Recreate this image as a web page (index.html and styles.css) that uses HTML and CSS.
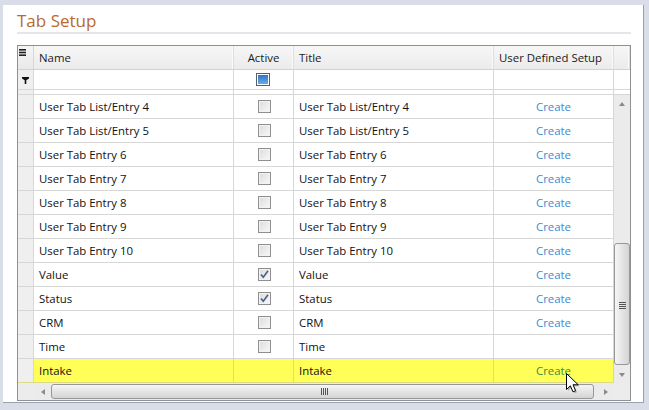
FILE: index.html
```html
<!DOCTYPE html>
<html lang="en">
<head>
    <meta charset="UTF-8">
    <title>Tab Setup</title>
    <link rel="stylesheet" href="styles.css">
</head>
<body>

<div class="panel">
    <h1 class="page-title">Tab Setup</h1>

    <div class="grid">
        <!-- header -->
        <div class="row head">
            <div class="ind">
                <svg width="7" height="7" viewBox="0 0 7 7"><rect x="0" y="0" width="7" height="1.6" fill="#222"/><rect x="0" y="2.7" width="7" height="1.6" fill="#222"/><rect x="0" y="5.4" width="7" height="1.6" fill="#222"/></svg>
            </div>
            <div class="cell c-name">Name</div>
            <div class="cell c-active">Active</div>
            <div class="cell c-title">Title</div>
            <div class="cell c-setup">User Defined Setup</div>
            <div class="cell c-spare"></div>
        </div>

        <!-- filter row -->
        <div class="row filter">
            <div class="ind">
                <svg width="7" height="7" viewBox="0 0 7 7"><path d="M0 0H7V1.5L4.3 3.2V7H2.7V3.2L0 1.5Z" fill="#111"/></svg>
            </div>
            <div class="cell c-name"></div>
            <div class="cell c-active"><span class="check mixed"></span></div>
            <div class="cell c-title"></div>
            <div class="cell c-setup"></div>
            <div class="cell c-spare"></div>
        </div>

        <!-- partially scrolled row -->
        <div class="row gap">
            <div class="ind"></div>
            <div class="cell c-name"></div>
            <div class="cell c-active"></div>
            <div class="cell c-title"></div>
            <div class="cell c-setup"></div>
            <div class="cell c-spare"></div>
        </div>

        <div class="body">
            <div class="rows">
                <div class="row">
                    <div class="ind"></div>
                    <div class="cell c-name">User Tab List/Entry 4</div>
                    <div class="cell c-active"><span class="check"></span></div>
                    <div class="cell c-title">User Tab List/Entry 4</div>
                    <div class="cell c-setup"><a class="create">Create</a></div>
                </div>
                <div class="row">
                    <div class="ind"></div>
                    <div class="cell c-name">User Tab List/Entry 5</div>
                    <div class="cell c-active"><span class="check"></span></div>
                    <div class="cell c-title">User Tab List/Entry 5</div>
                    <div class="cell c-setup"><a class="create">Create</a></div>
                </div>
                <div class="row">
                    <div class="ind"></div>
                    <div class="cell c-name">User Tab Entry 6</div>
                    <div class="cell c-active"><span class="check"></span></div>
                    <div class="cell c-title">User Tab Entry 6</div>
                    <div class="cell c-setup"><a class="create">Create</a></div>
                </div>
                <div class="row">
                    <div class="ind"></div>
                    <div class="cell c-name">User Tab Entry 7</div>
                    <div class="cell c-active"><span class="check"></span></div>
                    <div class="cell c-title">User Tab Entry 7</div>
                    <div class="cell c-setup"><a class="create">Create</a></div>
                </div>
                <div class="row">
                    <div class="ind"></div>
                    <div class="cell c-name">User Tab Entry 8</div>
                    <div class="cell c-active"><span class="check"></span></div>
                    <div class="cell c-title">User Tab Entry 8</div>
                    <div class="cell c-setup"><a class="create">Create</a></div>
                </div>
                <div class="row">
                    <div class="ind"></div>
                    <div class="cell c-name">User Tab Entry 9</div>
                    <div class="cell c-active"><span class="check"></span></div>
                    <div class="cell c-title">User Tab Entry 9</div>
                    <div class="cell c-setup"><a class="create">Create</a></div>
                </div>
                <div class="row">
                    <div class="ind"></div>
                    <div class="cell c-name">User Tab Entry 10</div>
                    <div class="cell c-active"><span class="check"></span></div>
                    <div class="cell c-title">User Tab Entry 10</div>
                    <div class="cell c-setup"><a class="create">Create</a></div>
                </div>
                <div class="row">
                    <div class="ind"></div>
                    <div class="cell c-name">Value</div>
                    <div class="cell c-active"><span class="check on"><svg width="11" height="11" viewBox="0 0 11 11"><path d="M2 5.5L4.3 8.3L9 1.8" fill="none" stroke="#4b5d8f" stroke-width="1.6"/></svg></span></div>
                    <div class="cell c-title">Value</div>
                    <div class="cell c-setup"><a class="create">Create</a></div>
                </div>
                <div class="row">
                    <div class="ind"></div>
                    <div class="cell c-name">Status</div>
                    <div class="cell c-active"><span class="check on"><svg width="11" height="11" viewBox="0 0 11 11"><path d="M2 5.5L4.3 8.3L9 1.8" fill="none" stroke="#4b5d8f" stroke-width="1.6"/></svg></span></div>
                    <div class="cell c-title">Status</div>
                    <div class="cell c-setup"><a class="create">Create</a></div>
                </div>
                <div class="row">
                    <div class="ind"></div>
                    <div class="cell c-name">CRM</div>
                    <div class="cell c-active"><span class="check"></span></div>
                    <div class="cell c-title">CRM</div>
                    <div class="cell c-setup"><a class="create">Create</a></div>
                </div>
                <div class="row">
                    <div class="ind"></div>
                    <div class="cell c-name">Time</div>
                    <div class="cell c-active"><span class="check"></span></div>
                    <div class="cell c-title">Time</div>
                    <div class="cell c-setup"></div>
                </div>
                <div class="row selected">
                    <div class="ind"></div>
                    <div class="cell c-name">Intake</div>
                    <div class="cell c-active"></div>
                    <div class="cell c-title">Intake</div>
                    <div class="cell c-setup"><a class="create">Create</a></div>
                </div>
            </div>

            <!-- vertical scrollbar -->
            <div class="vscroll">
                <div class="sb-btn"><span class="arrow up"></span></div>
                <div class="vthumb"><span class="grip-v"></span></div>
                <div class="sb-btn end"><span class="arrow down"></span></div>
            </div>
        </div>

        <!-- horizontal scrollbar -->
        <div class="hbar">
            <div class="hcorner-left"></div>
            <div class="hscroll">
                <div class="sb-btn-h"><span class="arrow left"></span></div>
                <div class="hthumb"><span class="grip-h"></span></div>
                <div class="sb-btn-h end"><span class="arrow right"></span></div>
            </div>
            <div class="hcorner-right"></div>
        </div>
    </div>
</div>

<!-- mouse pointer over the Intake row -->
<svg class="pointer" width="16" height="22" viewBox="0 0 16 22">
    <path d="M1.5 1.5V17.5L5.3 13.8L8 19.8L10.6 18.7L8 12.8H13.2Z" fill="#000" opacity="0.25" transform="translate(1.5 1.5)"/>
    <path d="M1.5 1.5V17.5L5.3 13.8L8 19.8L10.6 18.7L8 12.8H13.2Z" fill="#fff" stroke="#000" stroke-width="1"/>
</svg>

</body>
</html>
```

FILE: styles.css
```css
body {
    margin: 0;
    background-color: #d8dde7;
    font-family: "Open Sans", "Noto Sans", Arial, sans-serif;
    font-size: 11.4px;
    color: #111;
    position: relative;
    height: 410px;
    overflow: hidden;
}
.panel {
    margin: 5px 0 0 3px;
    width: 614px;
    height: 397px;
    padding: 0 12px 0 14px;
    background-color: #fff;
    border-right: 1px solid #98a1ad;
    border-bottom: 1px solid #98a1ad;
}
.page-title {
    margin: 0;
    padding-top: 5px;
    height: 22px;
    line-height: 22px;
    font-size: 17px;
    font-weight: normal;
    color: #b86a2e;
    border-bottom: 2px solid #e3e7ec;
}
.grid {
    margin-top: 11px;
    width: 614px;
    box-sizing: border-box;
    border: 1px solid #8e9093;
    background-color: #fff;
}
.row {
    display: flex;
    height: 24px;
    box-sizing: border-box;
    border-bottom: 1px solid #d7d7d7;
}
.ind {
    width: 16px;
    flex: none;
    box-sizing: border-box;
    border-right: 1px solid #d7d7d7;
    background-color: #efefef;
    display: flex;
    align-items: center;
    justify-content: center;
}
.cell {
    flex: none;
    box-sizing: border-box;
    border-right: 1px solid #d7d7d7;
    padding-left: 5px;
    line-height: 23px;
    white-space: nowrap;
    overflow: hidden;
}
.c-name { width: 200px; }
.c-active {
    width: 60px;
    padding-left: 0;
    display: flex;
    align-items: center;
    justify-content: center;
}
.c-title { width: 200px; }
.c-setup {
    width: 120px;
    padding-left: 0;
    text-align: center;
}
.c-spare {
    flex: 1;
    border-right: none;
}

/* header */
.head {
    background: linear-gradient(#f7f7f7, #ebebeb);
    border-bottom: 1px solid #d2d2d2;
}
.head .ind {
    background: linear-gradient(#f5f5f5, #e9e9e9);
    align-items: flex-start;
    padding-top: 3px;
    justify-content: flex-start;
    padding-left: 1px;
}
.head .cell {
    border-right: 1px solid #dedede;
    box-shadow: inset -1px 0 0 #fafafa;
    color: #1a1a1a;
}
.head .c-setup {
    text-align: left;
    padding-left: 5px;
}
.filter {
    height: 20px;
}
.filter .ind {
    padding-top: 1px;
}
.gap {
    height: 5px;
}

/* body with scrollbar */
.body {
    display: flex;
}
.rows {
    width: 596px;
    flex: none;
}
.selected .cell {
    background-color: #ffff57;
    border-right-color: #dcdc86;
}
.selected {
    border-bottom-color: #dcdc86;
}
.selected .create {
    color: #3e8b3a;
}
.create {
    color: #3a8ad4;
    cursor: pointer;
}

/* check boxes */
.check {
    display: block;
    width: 13px;
    height: 13px;
    box-sizing: border-box;
    border: 1px solid #8e8f8f;
    background: linear-gradient(135deg, #dcdcdc, #f8f8f8);
    box-shadow: inset 0 0 0 1px #f2f2f2;
    margin-left: 2px;
    position: relative;
}
.check svg {
    position: absolute;
    left: 0;
    top: 0;
}
.check.mixed {
    border-color: #5a5e66;
    margin-left: -1px;
    background: linear-gradient(#2a6fc0, #6ab0f0);
    box-shadow: inset 0 0 0 1px #fff;
    width: 14px;
}

/* scrollbars */
.vscroll {
    width: 16px;
    flex: none;
    background-color: #ebebeb;
    display: flex;
    flex-direction: column;
    height: 288px;
}
.sb-btn {
    height: 17px;
    display: flex;
    align-items: center;
    justify-content: center;
}
.sb-btn.end {
    margin-top: auto;
}
.vthumb {
    margin-top: 131px;
    height: 122px;
    box-sizing: border-box;
    border: 1px solid #979797;
    border-radius: 3px;
    background: linear-gradient(90deg, #f6f6f6, #e6e6e6 45%, #d4d4d4);
    display: flex;
    align-items: center;
    justify-content: center;
}
.grip-v {
    width: 7px;
    height: 1px;
    background: #555;
    box-shadow: 0 2px 0 #555, 0 4px 0 #555, 0 -2px 0 #555;
    margin-top: 1px;
}
.arrow {
    width: 0;
    height: 0;
    border: 3.5px solid transparent;
}
.arrow.up { border-bottom: 4px solid #8a8a8a; border-top: 0; }
.arrow.down { border-top: 4px solid #8a8a8a; border-bottom: 0; }
.arrow.left { border-right: 4px solid #8a8a8a; border-left: 0; }
.arrow.right { border-left: 4px solid #8a8a8a; border-right: 0; }

.hbar {
    display: flex;
    height: 17px;
    background-color: #ebebeb;
}
.hcorner-left {
    width: 16px;
    flex: none;
    background-color: #ececec;
}
.hscroll {
    width: 580px;
    flex: none;
    display: flex;
    align-items: center;
}
.sb-btn-h {
    width: 17px;
    height: 17px;
    flex: none;
    display: flex;
    align-items: center;
    justify-content: center;
}
.sb-btn-h.end {
    margin-left: auto;
}
.hthumb {
    width: 543px;
    height: 15px;
    box-sizing: border-box;
    border: 1px solid #979797;
    border-radius: 3px;
    background: linear-gradient(#f6f6f6, #e6e6e6 45%, #d4d4d4);
    display: flex;
    align-items: center;
    justify-content: center;
}
.grip-h {
    width: 1px;
    height: 7px;
    background: #555;
    box-shadow: 2px 0 0 #555, 4px 0 0 #555, -2px 0 0 #555;
    margin-left: 1px;
}
.hcorner-right {
    flex: 1;
    background-color: #ececec;
}

.pointer {
    position: absolute;
    left: 565px;
    top: 372px;
}
```
